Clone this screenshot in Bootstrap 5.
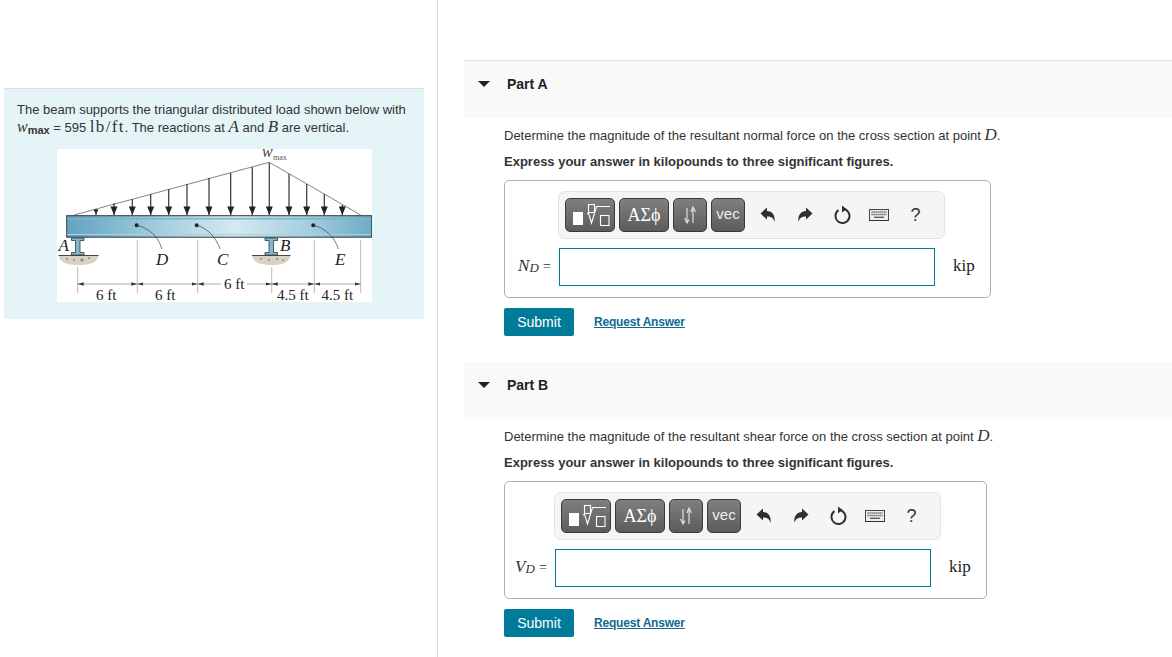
<!DOCTYPE html>
<html lang="en"><head><meta charset="utf-8"><title>Beam problem</title>
<link rel="stylesheet" href="https://cdn.jsdelivr.net/npm/bootstrap@5.3.0/dist/css/bootstrap.min.css">
<script src="https://cdn.jsdelivr.net/npm/bootstrap@5.3.0/dist/js/bootstrap.bundle.min.js"></script>
<style>
html,body{height:657px;overflow:hidden;background:#fff}
body{font-family:"Liberation Sans",Arial,sans-serif;font-size:13px;color:#333;line-height:20px}
.math{font-family:"Liberation Serif",serif;font-size:17px;line-height:0}
.math i{font-style:italic}
.unitmath{font-family:"Liberation Serif",serif;font-size:17px;line-height:0;letter-spacing:1.300px}
.left-col{width:438px;height:657px;border-right:1px solid #d9d9d9;padding:88px 0 0 4px;flex:none}
.intro{width:420px;height:231px;background:#e5f5f7;border-top:1px solid #dedede;padding:12px 13px 0}
.intro p{margin:0;line-height:17.500px;height:37px}
.wmax{font-family:"Liberation Serif",serif;font-style:italic;font-size:16px;line-height:0}
.wmax sub{font-family:"Liberation Sans",sans-serif;font-style:normal;font-weight:700;font-size:11px;bottom:-.2em;line-height:0}
.fig{display:block;width:315px;height:153px;margin:11px 0 0 40px;background:#fff}
.fig text{font-family:"Liberation Serif",serif;fill:#222;font-size:15px}
.fig .it{font-style:italic;font-size:17px}
.fig .wlab{font-size:16px;fill:#444}
.fig .maxlab{font-size:8px;fill:#555}
.right-col{padding:60px 0 0 26px;flex:1;min-width:0}
.part{height:301px}
.part-head{height:58px;background:#f9f9f9;background-clip:padding-box;border-top:1px solid #e2e2e2;font-weight:700;font-size:14px;padding:13px 0 0 43px;position:relative;color:#222}
.part-head.plain{border-top-color:#fff}
.caret-tri{position:absolute;left:14px;top:20px;width:0;height:0;border-left:6px solid transparent;border-right:6px solid transparent;border-top:6px solid #222}
.part-body{padding-left:40px}
.q1{padding-top:8px;height:33px;margin:0}
.q2{height:29px;font-weight:700;margin:0;padding-top:1px}
.ansbox{border:1px solid #b0b0b0;border-radius:5px;height:118px;padding:10px 0 0 0}
.toolbar{height:48px;background:#f5f5f5;border:1px solid #e3e3e3;border-radius:7px;padding:6px 0 0 6px;width:387px}
.tb{height:34px;border:1px solid #3a3a3a;border-radius:5px;background:linear-gradient(#7f7f7f,#5c5c5c);color:#fff;padding:0;display:flex;align-items:center;justify-content:center;overflow:hidden}
.tb-mat{width:50px}.tb-gr{width:50px;font-family:"Liberation Serif",serif;font-size:18px}.tb-ar{width:34px}.tb-vec{width:34px;color:#eee;font-size:15px;padding-bottom:3px}
.ti{width:37px;display:flex;justify-content:center;align-items:center;height:34px;color:#333}
.ti-q{font-size:18px}
.ansrow{margin-top:9px;height:38px}
.lbl{font-family:"Liberation Serif",serif;font-size:17px;text-align:right;flex:none;padding-right:8px;padding-bottom:2px;white-space:nowrap}
.lbl sub{font-size:13px;font-style:italic;bottom:-.15em}
.eq{font-size:14px}
.ansinput{height:38px;width:376px;flex:none;border:1px solid #007c9a;padding:0}
.unit-lbl{font-family:"Liberation Serif",serif;font-size:17px;margin-left:18px;color:#222;padding-bottom:2px}
.sub-row{margin-top:10px;height:28px}
.btn-sub{width:70px;height:28px;background:#007c9a;color:#fff;border:0;border-radius:2px;padding:0;font-size:14px;line-height:28px}
.req{color:#0f6a8f;font-weight:700;font-size:12px;letter-spacing:-.2px;text-decoration:underline;margin-left:20px}
</style></head>
<body>
<svg width="0" height="0" class="d-block position-absolute" aria-hidden="true">
  <defs>
    <symbol id="i-mat" viewBox="0 0 48 32"><rect x="7" y="13" width="10" height="13" fill="#fff"/><g fill="none" stroke="#fff" stroke-width="1.100"><rect x="22.500" y="5.500" width="6" height="8"/><path d="M21 15l1.500-1 3 10 5-16.500H44"/><rect x="34.500" y="16.500" width="8.500" height="10"/></g></symbol>
    <symbol id="i-ud" viewBox="0 0 32 32"><path d="M13 9V23M10.500 19L13 24L15 20.500M19 24V9M17 13L19 8L21.500 13" fill="none" stroke="#ddd" stroke-width="1.200"/></symbol>
    <symbol id="i-undo" viewBox="0 0 16 16"><path d="M.5 6.500L7 .5V4C12 4 15.500 8 14.500 15C13.500 11 11.500 9.500 7 9.500V12.500z" fill="#2f2f2f"/></symbol>
    <symbol id="i-redo" viewBox="0 0 16 16"><path d="M15.500 6.500L9 .5V4C4 4 .5 8 1.500 15C2.500 11 4.500 9.500 9 9.500V12.500z" fill="#2f2f2f"/></symbol>
    <symbol id="i-reset" viewBox="0 0 18 20"><path d="M5.500 5.200A7 7 0 1 0 10 4" fill="none" stroke="#2f2f2f" stroke-width="2"/><path d="M9 .5V7.500L13.500 4z" fill="#2f2f2f"/></symbol>
    <symbol id="i-kbd" viewBox="0 0 20 12"><rect x=".5" y=".5" width="19" height="11" fill="#eee" stroke="#444"/><path d="M2.500 3H17.500M2.500 5.500H17.500" stroke="#555" stroke-width="1.300" stroke-dasharray="1.200 .8"/><path d="M5 8.300H15" stroke="#555" stroke-width="1.300"/><path d="M0 11.500H20" stroke="#333"/></symbol>
  </defs>
</svg>
<div class="d-flex">
  <div class="left-col">
    <div class="intro">
      <p>The beam supports the triangular distributed load shown below with <span class="wmax">w<sub>max</sub></span> = 595 <span class="unitmath">lb/ft</span>. The reactions at <span class="math"><i>A</i></span> and <span class="math"><i>B</i></span> are vertical.</p>
      <svg class="fig" viewBox="0 0 315 153" role="img" aria-label="Beam diagram">
        <defs>
          <linearGradient id="bm" x1="0" x2="1" y1="0" y2="0">
            <stop offset="0" stop-color="#5d9fbe"/><stop offset=".3" stop-color="#9ecbdc"/><stop offset=".55" stop-color="#d3e8f0"/><stop offset=".8" stop-color="#9fcbdc"/><stop offset="1" stop-color="#69a8c4"/>
          </linearGradient>
          <pattern id="hatch" width="3" height="3" patternUnits="userSpaceOnUse" patternTransform="rotate(45)"><path d="M0 0V3" stroke="#fff" stroke-opacity=".22" stroke-width="1"/></pattern>
          <marker id="ah" markerUnits="userSpaceOnUse" markerWidth="7" markerHeight="4" refX="6" refY="2" orient="auto-start-reverse"><path d="M0 .3L6 2L0 3.700z" fill="#333"/></marker>
        </defs>
        <path d="M17 66L212.300 13.300L303.700 66" fill="none" stroke="#666" stroke-width=".8"/>
        <path d="M39 60V66M57 54V66M75.300 50V66M93.700 45V66M111.700 40V66M130 35V66M152 29V66M173.700 24V66M195.300 18V66M212.300 14V66M232 25V66M249.700 35V66M267.300 45V66M285.300 56V66" stroke="#333" stroke-width="1.200"/>
        <g fill="#222">
          <path d="M36.500 60.500h5L39 65z"/>
          <path d="M53.500 57.500h7L57 66zM71.800 57.500h7L75.300 66zM90.200 57.500h7L93.700 66zM108.200 57.500h7L111.700 66zM126.500 57.500h7L130 66zM148.500 57.500h7L152 66zM170.200 57.500h7L173.700 66zM191.800 57.500h7L195.300 66zM208.800 57.500h7L212.300 66zM228.500 57.500h7L232 66zM246.200 57.500h7L249.700 66zM263.800 57.500h7L267.300 66zM281.800 57.500h7L285.300 66z"/>
        </g>
        <rect x="9.700" y="66.700" width="305" height="21.500" fill="url(#bm)" stroke="#2c3b42" stroke-width="1"/>
        <rect x="10" y="70" width="304.500" height="15" fill="url(#hatch)"/>
        <path d="M10 69.800H314" stroke="#7fb3ca" stroke-width="1.500" fill="none"/>
        <path d="M10 85.500H314" stroke="#a9d2e0" stroke-width="1" fill="none"/>
        <g fill="#222"><circle cx="79.700" cy="76.300" r="2"/><circle cx="139.700" cy="76.300" r="2"/><circle cx="256.300" cy="76.300" r="2"/></g>
        <path d="M80 76.300C92 79 102 88 104.700 100M140 76.300C150 79 159 88 163 100M256.500 76.300C268 79 278 88 281.300 100" fill="none" stroke="#444" stroke-width=".7"/>
        <g fill="#85b7cc" stroke="#2c3b42" stroke-width=".8">
          <path d="M14.500 89H27V91.500H23V103.500H27V106H14.500V103.500H18.500V91.500H14.500z"/>
          <path d="M208 89H220.500V91.500H216.500V103.500H220.500V106H208V103.500H212V91.500H208z"/>
        </g>
        <path d="M1.500 106.500H41.500C40 114 33 116 22 116C10 116 3 114 1.500 106.500z" fill="#d6d3c4"/>
        <path d="M195 106.500H233.500C232 114 226 116 214 116C203 116 197 114 195 106.500z" fill="#d6d3c4"/>
        <path d="M1.500 106.500H41.500M195 106.500H233.500" stroke="#333" stroke-width=".9"/>
        <g fill="#8d8a7c"><circle cx="10" cy="110" r="1"/><circle cx="17" cy="111" r="1"/><circle cx="25" cy="111" r="1.600"/><circle cx="32" cy="109" r="1"/><circle cx="204" cy="110" r="1"/><circle cx="212" cy="111" r="1"/><circle cx="220" cy="110" r="1"/><circle cx="226" cy="111" r="1"/></g>
        <path d="M20.700 118V144M80.300 91V144M140.700 91V144M214.700 118V144M257.300 91V144M303.700 91V144" stroke="#aaa" stroke-width=".8" fill="none"/>
        <g stroke="#888" stroke-width=".7" fill="none">
          <path d="M20.700 135H80.300" marker-start="url(#ah)" marker-end="url(#ah)"/>
          <path d="M80.300 135H140.700" marker-start="url(#ah)" marker-end="url(#ah)"/>
          <path d="M140.700 135H214.700" marker-start="url(#ah)" marker-end="url(#ah)"/>
          <path d="M214.700 135H257.300" marker-start="url(#ah)" marker-end="url(#ah)"/>
          <path d="M257.300 135H303.700" marker-start="url(#ah)" marker-end="url(#ah)"/>
        </g>
        <rect x="164" y="130" width="26" height="10" fill="#fff"/>
        <text class="it wlab" x="205" y="8">w</text><text class="maxlab" x="216" y="11">max</text>
        <text class="it" x="1.500" y="102">A</text><text class="it" x="223" y="102">B</text>
        <text class="it" x="99" y="116">D</text><text class="it" x="160" y="116">C</text><text class="it" x="278" y="116">E</text>
        <text x="39" y="151">6 ft</text><text x="98" y="151">6 ft</text><text x="167" y="140">6 ft</text>
        <text x="220" y="151">4.5 ft</text><text x="264.500" y="151">4.5 ft</text>
      </svg>
    </div>
  </div>
  <div class="right-col">
    <div class="part">
      <div class="part-head"><span class="caret-tri"></span>Part A</div>
      <div class="part-body">
        <p class="q1">Determine the magnitude of the resultant normal force on the cross section at point <span class="math"><i>D</i></span>.</p>
        <p class="q2">Express your answer in kilopounds to three significant figures.</p>
        <div class="ansbox" style="width:487px">
          <div class="toolbar d-flex gap-1" style="margin-left:53px">
            <div class="tb tb-mat"><svg width="48" height="32"><use href="#i-mat"/></svg></div>
            <div class="tb tb-gr">ΑΣϕ</div>
            <div class="tb tb-ar"><svg width="32" height="32"><use href="#i-ud"/></svg></div>
            <div class="tb tb-vec">vec</div>
            <div class="d-flex">
              <div class="ti"><svg width="16" height="16"><use href="#i-undo"/></svg></div>
              <div class="ti"><svg width="16" height="16"><use href="#i-redo"/></svg></div>
              <div class="ti"><svg width="18" height="20"><use href="#i-reset"/></svg></div>
              <div class="ti"><svg width="20" height="12"><use href="#i-kbd"/></svg></div>
              <div class="ti ti-q">?</div>
            </div>
          </div>
          <div class="ansrow d-flex align-items-center">
            <div class="lbl" style="width:54px"><i>N</i><sub>D</sub> <span class="eq">=</span></div>
            <div class="ansinput"></div>
            <div class="unit-lbl">kip</div>
          </div>
        </div>
        <div class="sub-row d-flex align-items-center">
          <button class="btn btn-sub" type="button">Submit</button>
          <a class="req" href="#">Request Answer</a>
        </div>
      </div>
    </div>
    <div class="part">
      <div class="part-head plain"><span class="caret-tri"></span>Part B</div>
      <div class="part-body">
        <p class="q1">Determine the magnitude of the resultant shear force on the cross section at point <span class="math"><i>D</i></span>.</p>
        <p class="q2">Express your answer in kilopounds to three significant figures.</p>
        <div class="ansbox" style="width:483px">
          <div class="toolbar d-flex gap-1" style="margin-left:49px">
            <div class="tb tb-mat"><svg width="48" height="32"><use href="#i-mat"/></svg></div>
            <div class="tb tb-gr">ΑΣϕ</div>
            <div class="tb tb-ar"><svg width="32" height="32"><use href="#i-ud"/></svg></div>
            <div class="tb tb-vec">vec</div>
            <div class="d-flex">
              <div class="ti"><svg width="16" height="16"><use href="#i-undo"/></svg></div>
              <div class="ti"><svg width="16" height="16"><use href="#i-redo"/></svg></div>
              <div class="ti"><svg width="18" height="20"><use href="#i-reset"/></svg></div>
              <div class="ti"><svg width="20" height="12"><use href="#i-kbd"/></svg></div>
              <div class="ti ti-q">?</div>
            </div>
          </div>
          <div class="ansrow d-flex align-items-center">
            <div class="lbl" style="width:50px"><i>V</i><sub>D</sub> <span class="eq">=</span></div>
            <div class="ansinput"></div>
            <div class="unit-lbl">kip</div>
          </div>
        </div>
        <div class="sub-row d-flex align-items-center">
          <button class="btn btn-sub" type="button">Submit</button>
          <a class="req" href="#">Request Answer</a>
        </div>
      </div>
    </div>
  </div>
</div>
</body></html>
